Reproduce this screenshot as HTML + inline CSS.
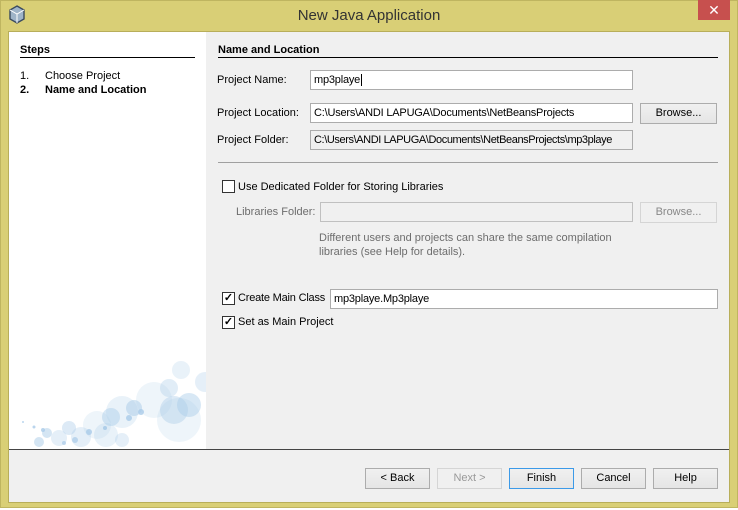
<!DOCTYPE html>
<html><head><meta charset="utf-8"><style>
*{margin:0;padding:0;box-sizing:border-box}
body{width:738px;height:510px;position:relative;overflow:hidden;background:#fff;font-family:"Liberation Sans",sans-serif;font-size:11px;color:#000}
.a{position:absolute;white-space:nowrap}
.frame{left:0;top:0;width:738px;height:508px;background:#d9cf76;border:1px solid #bfb560}
.client{left:8px;top:31px;width:722px;height:472px;background:#f0f0f0;border:1px solid #b8ae5a}
.inp{position:absolute;background:#fff;border:1px solid #acacac;height:20px;padding:3px 3px;font-size:11px;white-space:nowrap;overflow:hidden;letter-spacing:-0.2px}
.btn{position:absolute;height:21px;border:1px solid #acacac;background:linear-gradient(#f0f0f0,#e5e5e5);text-align:center;line-height:19px;font-size:11px}
.cb{position:absolute;width:13px;height:13px;border:1px solid #333;background:#fff;font-size:11px;line-height:11px;text-align:center;font-weight:bold}
.g{color:#6d6d6d}
</style></head><body>
<div class="a frame"></div>
<svg class="a" style="left:8px;top:5px" width="18" height="20" viewBox="0 0 18 20"><path d="M9 1 L16 5 L16 14 L9 18 L2 14 L2 5 Z" fill="#9fb4c8" stroke="#3a4a5e" stroke-width="1.4"/><path d="M2 5 L9 9 L16 5 M9 9 L9 18" stroke="#fff" stroke-width="1" fill="none"/></svg>
<div class="a" style="left:0;width:738px;top:7px;text-align:center;font-size:15px;color:#333">New Java Application</div>
<div class="a" style="left:698px;top:0;width:32px;height:20px;background:#c7504e;color:#fff;text-align:center;font-size:14px;line-height:20px">✕</div>
<div class="a client"></div>
<div class="a" style="left:9px;top:32px;width:197px;height:417px;background:#fff"></div>
<svg class="a" style="left:9px;top:360px" width="197" height="89">
<g fill="#a9cbe8">
<circle cx="172" cy="10" r="9" opacity=".25"/><circle cx="160" cy="28" r="9" opacity=".35"/><circle cx="196" cy="22" r="10" opacity=".3"/>
<circle cx="145" cy="40" r="18" opacity=".2"/><circle cx="165" cy="50" r="14" opacity=".4"/><circle cx="180" cy="45" r="12" opacity=".45"/>
<circle cx="125" cy="48" r="8" opacity=".5"/><circle cx="113" cy="52" r="16" opacity=".25"/><circle cx="170" cy="60" r="22" opacity=".2"/>
<circle cx="102" cy="57" r="9" opacity=".45"/><circle cx="88" cy="65" r="14" opacity=".2"/><circle cx="97" cy="75" r="12" opacity=".25"/>
<circle cx="72" cy="77" r="10" opacity=".3"/><circle cx="60" cy="68" r="7" opacity=".4"/><circle cx="50" cy="78" r="8" opacity=".3"/>
<circle cx="38" cy="73" r="5" opacity=".5"/><circle cx="30" cy="82" r="5" opacity=".5"/><circle cx="113" cy="80" r="7" opacity=".3"/>
<circle cx="120" cy="58" r="3" opacity=".8"/><circle cx="132" cy="52" r="3" opacity=".8"/><circle cx="80" cy="72" r="3" opacity=".8"/>
<circle cx="66" cy="80" r="3" opacity=".7"/><circle cx="55" cy="83" r="2" opacity=".7"/><circle cx="34" cy="70" r="2" opacity=".8"/>
<circle cx="25" cy="67" r="1.5" opacity=".8"/><circle cx="14" cy="62" r="1" opacity=".8"/><circle cx="96" cy="68" r="2" opacity=".9"/>
</g></svg>
<div class="a" style="left:20px;top:44px;font-weight:bold">Steps</div>
<div class="a" style="left:20px;top:57px;width:175px;height:1px;background:#000"></div>
<div class="a" style="left:20px;top:70px">1.</div><div class="a" style="left:45px;top:70px">Choose Project</div>
<div class="a" style="left:20px;top:84px;font-weight:bold">2.</div><div class="a" style="left:45px;top:84px;font-weight:bold">Name and Location</div>

<div class="a" style="left:218px;top:44px;font-weight:bold">Name and Location</div>
<div class="a" style="left:218px;top:57px;width:500px;height:1px;background:#000"></div>
<div class="a" style="left:217px;top:74px">Project Name:</div>
<div class="inp" style="left:310px;top:70px;width:323px">mp3playe<span style="border-left:1px solid #000;margin-left:1px"></span></div>
<div class="a" style="left:217px;top:107px">Project Location:</div>
<div class="inp" style="left:310px;top:103px;width:323px">C:\Users\ANDI LAPUGA\Documents\NetBeansProjects</div>
<div class="btn" style="left:640px;top:103px;width:77px">Browse...</div>
<div class="a" style="left:217px;top:134px">Project Folder:</div>
<div class="inp" style="left:310px;top:130px;width:323px;background:#f0f0f0;letter-spacing:-0.4px">C:\Users\ANDI LAPUGA\Documents\NetBeansProjects\mp3playe</div>
<div class="a" style="left:218px;top:162px;width:500px;height:1px;background:#a0a0a0"></div>

<div class="cb" style="left:222px;top:180px"></div>
<div class="a" style="left:238px;top:181px">Use Dedicated Folder for Storing Libraries</div>
<div class="a g" style="left:236px;top:206px">Libraries Folder:</div>
<div class="inp" style="left:320px;top:202px;width:313px;background:#f0f0f0;border-color:#c0c0c0"></div>
<div class="btn g" style="left:640px;top:202px;width:77px;border-color:#d5d5d5;background:#f0f0f0;color:#888">Browse...</div>
<div class="a g" style="left:319px;top:232px">Different users and projects can share the same compilation</div>
<div class="a g" style="left:319px;top:246px">libraries (see Help for details).</div>

<div class="cb" style="left:222px;top:292px">✓</div>
<div class="a" style="left:238px;top:292px;letter-spacing:-0.2px">Create Main Class</div>
<div class="inp" style="left:330px;top:289px;width:388px">mp3playe.Mp3playe</div>
<div class="cb" style="left:222px;top:316px">✓</div>
<div class="a" style="left:238px;top:316px">Set as Main Project</div>

<div class="a" style="left:9px;top:449px;width:720px;height:1px;background:#444"></div>
<div class="btn" style="left:365px;top:468px;width:65px">&lt; Back</div>
<div class="btn" style="left:437px;top:468px;width:65px;color:#999;border-color:#d5d5d5;background:#f0f0f0">Next &gt;</div>
<div class="btn" style="left:509px;top:468px;width:65px;border-color:#3c9ae8">Finish</div>
<div class="btn" style="left:581px;top:468px;width:65px">Cancel</div>
<div class="btn" style="left:653px;top:468px;width:65px">Help</div>
</body></html>
